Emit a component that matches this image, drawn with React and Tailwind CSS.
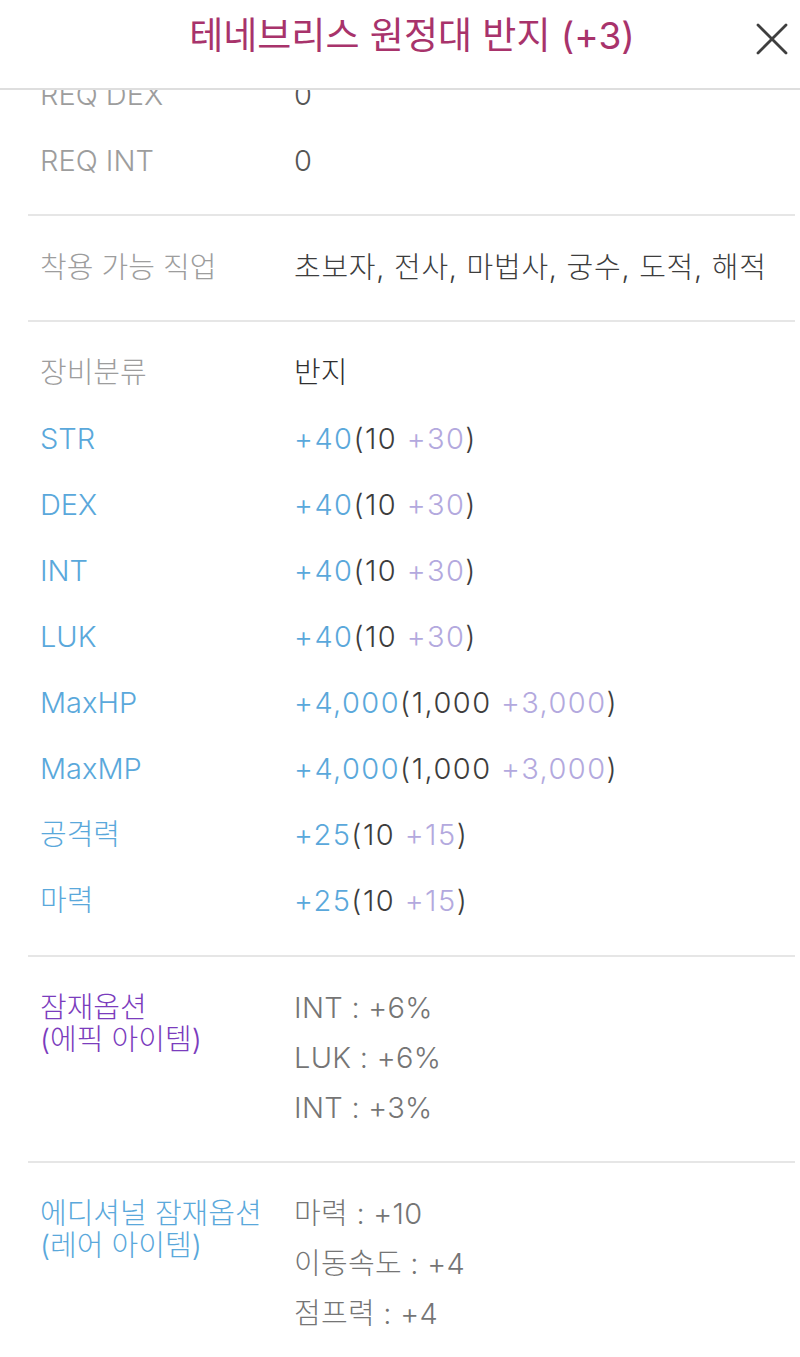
import React from "react";

const FONT = { fontFamily: "Inter, 'Noto Sans CJK KR', sans-serif" };

const reqRows = [
  ["REQ DEX", "0"],
  ["REQ INT", "0"],
];

const statRows = [
  ["STR", "+40", "10", "+30"],
  ["DEX", "+40", "10", "+30"],
  ["INT", "+40", "10", "+30"],
  ["LUK", "+40", "10", "+30"],
  ["MaxHP", "+4,000", "1,000", "+3,000"],
  ["MaxMP", "+4,000", "1,000", "+3,000"],
  ["공격력", "+25", "10", "+15"],
  ["마력", "+25", "10", "+15"],
];

function Divider() {
  return <div className="ml-[28px] mr-[5px] border-t-2 border-[#e6e6e6]" />;
}

function Row({ label, labelClass = "text-[#9d9d9d]", children }) {
  return (
    <div className="flex items-center h-[66px]">
      <div className={"w-[294px] pl-[40px] shrink-0 " + labelClass}>{label}</div>
      <div className="text-[#3d3d3d]">{children}</div>
    </div>
  );
}

function OptionBlock({ title, sub, titleClass, lines }) {
  return (
    <div className="flex pt-[26px] pb-[28px]">
      <div className={"w-[294px] pl-[40px] shrink-0 pt-[9px] leading-[32px] " + titleClass}>
        <div>{title}</div>
        <div>{sub}</div>
      </div>
      <div className="text-[#757575] leading-[50px] tracking-[0.01em]">
        {lines.map((l) => (
          <div key={l}>{l}</div>
        ))}
      </div>
    </div>
  );
}

export default function App() {
  return (
    <div className="w-[800px] h-[1357px] bg-white flex flex-col overflow-hidden font-light text-[29px]" style={FONT}>
      <header className="relative h-[90px] shrink-0 border-b-2 border-[#dedede] flex items-center justify-center pb-[16px] pl-[24px]">
        <h1 className="text-[37px] font-normal text-[#a8336b]">테네브리스 원정대 반지 (+3)</h1>
        <button className="absolute right-[10px] top-[21px] w-[36px] h-[36px] flex items-center justify-center">
          <svg width="34" height="34" viewBox="0 0 34 34" fill="none" stroke="#3f3f3f" strokeWidth="2.8" strokeLinecap="round">
            <path d="M3 3 L31 31 M31 3 L3 31" />
          </svg>
        </button>
      </header>

      <div className="flex-1 overflow-hidden">
        <div className="-mt-[48px]">
          <div className="py-[20px]">
            {reqRows.map(([k, v]) => (
              <Row key={k} label={k}>
                <span className="text-[#555]">{v}</span>
              </Row>
            ))}
          </div>
          <Divider />
          <div className="pt-[19px] pb-[19px]">
            <Row label="착용 가능 직업">
              <span className="tracking-[0.025em]">초보자, 전사, 마법사, 궁수, 도적, 해적</span>
            </Row>
          </div>
          <Divider />
          <div className="pt-[18px] pb-[21px]">
            <Row label="장비분류">
              <span className="text-[#2f2f2f]">반지</span>
            </Row>
            {statRows.map(([k, total, base, bonus]) => (
              <Row key={k} label={k} labelClass="text-[#5aa8db]">
                <span className="tracking-[0.05em]">
                  <span className="text-[#5aa8db]">{total}</span>
                  <span>({base} </span>
                  <span className="text-[#b3a9de]">{bonus}</span>
                  <span>)</span>
                </span>
              </Row>
            ))}
          </div>
          <Divider />
          <OptionBlock
            title="잠재옵션"
            sub="(에픽 아이템)"
            titleClass="text-[#7b3cbd]"
            lines={["INT : +6%", "LUK : +6%", "INT : +3%"]}
          />
          <Divider />
          <OptionBlock
            title="에디셔널 잠재옵션"
            sub="(레어 아이템)"
            titleClass="text-[#5aa8db]"
            lines={["마력 : +10", "이동속도 : +4", "점프력 : +4"]}
          />
        </div>
      </div>
    </div>
  );
}
